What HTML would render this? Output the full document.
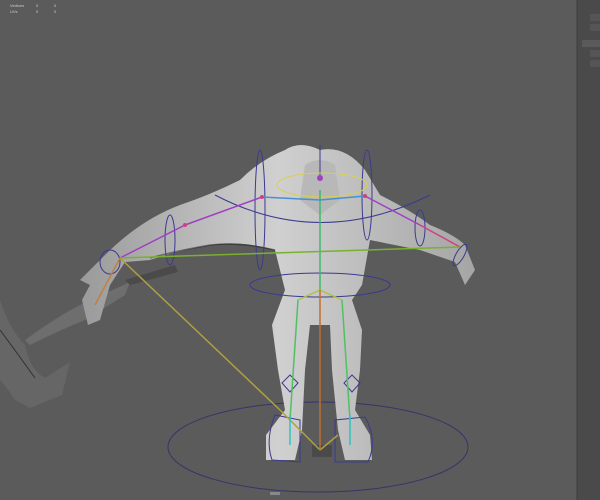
<!DOCTYPE html>
<html><head><style>
html,body{margin:0;padding:0;width:600px;height:500px;overflow:hidden;background:#5b5b5b;font-family:"Liberation Sans",sans-serif}
</style></head><body>
<svg width="600" height="500" viewBox="0 0 600 500" xmlns="http://www.w3.org/2000/svg">
<defs>
<linearGradient id="g" x1="0" y1="0" x2="1" y2="0">
<stop offset="0" stop-color="#9a9a9a"/><stop offset="0.5" stop-color="#d0d0d0"/><stop offset="1" stop-color="#a5a5a5"/>
</linearGradient>
</defs>
<rect width="600" height="500" fill="#5b5b5b"/>
<rect x="577" y="0" width="23" height="500" fill="#4a4a4a"/>
<line x1="577" y1="0" x2="577" y2="500" stroke="#3c3c3c"/>
<rect x="590" y="14" width="10" height="7" fill="#555"/>
<rect x="590" y="24" width="10" height="7" fill="#555"/>
<rect x="582" y="40" width="18" height="7" fill="#5a5a5a"/>
<rect x="590" y="50" width="10" height="7" fill="#555"/>
<rect x="590" y="60" width="10" height="7" fill="#555"/>
<text x="10" y="7" font-size="4" fill="#ccc">Vertices</text>
<text x="10" y="13" font-size="4" fill="#ccc">UVs</text>
<text x="36" y="7" font-size="4" fill="#ccc">0</text><text x="54" y="7" font-size="4" fill="#ccc">0</text>
<text x="36" y="13" font-size="4" fill="#ccc">0</text><text x="54" y="13" font-size="4" fill="#ccc">0</text>
<ellipse cx="318" cy="447" rx="150" ry="45" fill="none" stroke="#35356a" stroke-width="1"/>
<!-- axe -->
<path d="M80,305 L130,282 L125,295 L85,320 Q60,330 30,345 L25,340 Q55,318 80,305 Z" fill="#6e6e6e"/>
<path d="M0,300 Q10,330 25,345 Q30,370 45,378 L70,362 L62,395 L30,408 L15,400 Q5,385 0,380 Z" fill="#666"/>
<path d="M0,330 Q15,350 35,378" stroke="#333" fill="none" stroke-width="1"/>
<path d="M125,280 L175,265 L178,272 L130,285 Z" fill="#4a4a4a"/>
<!-- body -->
<path d="M240,180 Q260,160 285,150 Q300,140 320,150 Q345,145 365,170 L380,195 Q410,210 430,225 Q455,235 465,245 L475,270 L465,285 L455,262 L420,250 Q395,245 370,240 L362,285 L352,300 L362,330 L360,370 L355,410 L370,435 L372,460 L345,460 L338,430 L332,370 L330,325 L310,325 L305,370 L302,430 L295,460 L266,460 L266,435 L285,410 L278,370 L272,325 L285,290 L275,250 Q240,240 210,245 Q180,250 150,260 L125,262 L110,285 L100,320 L88,325 L82,300 L90,285 L80,280 L105,255 Q140,220 180,205 Q210,195 240,180 Z" fill="url(#g)"/>
<path d="M305,165 Q320,155 335,165 L340,200 L320,215 L300,200 Z" fill="#b8b8b8"/>
<rect x="312" y="445" width="20" height="12" fill="#4a4a4a"/>
<path d="M150,258 Q180,250 210,245 Q240,242 275,250" stroke="#222" stroke-width="1.5" fill="none" opacity="0.5"/>
<g fill="none" stroke="#3a3a90" stroke-width="1">
<ellipse cx="260" cy="210" rx="5" ry="60"/>
<ellipse cx="367" cy="195" rx="5" ry="45"/>
<ellipse cx="320" cy="285" rx="70" ry="12"/>
<path d="M215,195 Q320,250 430,195"/>
<ellipse cx="170" cy="240" rx="5" ry="25"/>
<ellipse cx="420" cy="228" rx="5" ry="18"/>
<ellipse cx="110" cy="262" rx="10" ry="12"/>
<ellipse cx="460" cy="255" rx="4" ry="12" transform="rotate(30 460 255)"/>
<path d="M320,145 L320,175"/>
<path d="M290,375 L298,383 L290,392 L282,383 Z"/>
<path d="M352,375 L360,383 L352,392 L344,383 Z"/>
<path d="M275,415 Q265,440 272,460 L300,462 L300,420 Z"/>
<path d="M335,420 L335,462 L368,462 Q378,440 365,417 Z"/>
</g>
<ellipse cx="322" cy="185" rx="45" ry="12" fill="none" stroke="#d8d050" stroke-width="1"/>
<g fill="none" stroke-width="1.5">
<line x1="320" y1="190" x2="320" y2="290" stroke="#3fb86a"/>
<line x1="262" y1="197" x2="320" y2="200" stroke="#4a90d0"/>
<line x1="365" y1="196" x2="320" y2="200" stroke="#4a90d0"/>
<line x1="262" y1="197" x2="185" y2="225" stroke="#a040c0"/>
<line x1="185" y1="225" x2="120" y2="258" stroke="#a040c0"/>
<line x1="365" y1="196" x2="420" y2="225" stroke="#a040c0"/>
<line x1="420" y1="225" x2="460" y2="247" stroke="#d04080"/>
<line x1="120" y1="258" x2="460" y2="247" stroke="#7ab030"/>
<line x1="120" y1="258" x2="95" y2="305" stroke="#c08040"/>
<line x1="120" y1="258" x2="280" y2="410" stroke="#b0a040"/>
<line x1="280" y1="410" x2="320" y2="450" stroke="#b0a040"/>
<line x1="320" y1="450" x2="338" y2="435" stroke="#b0a040"/>
<line x1="320" y1="290" x2="298" y2="300" stroke="#b0c040"/>
<line x1="320" y1="290" x2="342" y2="300" stroke="#b0c040"/>
<line x1="298" y1="300" x2="290" y2="420" stroke="#50c060"/>
<line x1="342" y1="300" x2="350" y2="420" stroke="#50c060"/>
<line x1="320" y1="290" x2="320" y2="450" stroke="#c07030"/>
<line x1="290" y1="415" x2="290" y2="445" stroke="#30c0c0"/>
<line x1="350" y1="415" x2="350" y2="445" stroke="#30c0c0"/>
</g>
<circle cx="185" cy="225" r="2" fill="#d04080"/>
<circle cx="365" cy="196" r="2" fill="#d04080"/>
<circle cx="262" cy="197" r="2" fill="#d04080"/>
<circle cx="320" cy="178" r="3" fill="#a040c0"/>
<rect x="270" y="492" width="10" height="3" fill="#888"/>
</svg>
</body></html>
